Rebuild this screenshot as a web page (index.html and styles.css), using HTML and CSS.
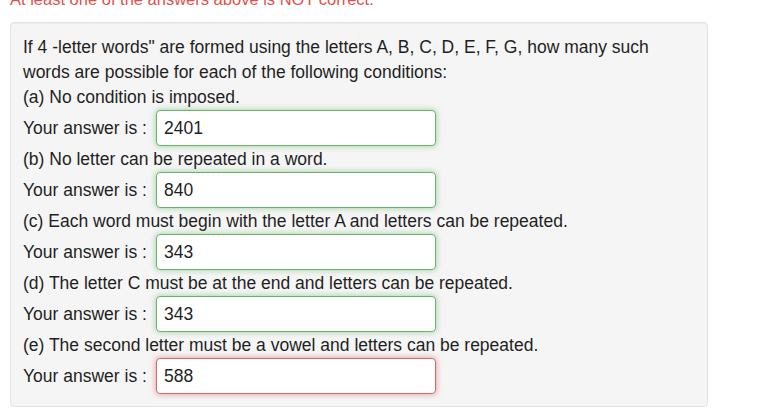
FILE: index.html
```html
<!DOCTYPE html>
<html lang="en">
<head>
  <meta charset="UTF-8">
  <title>Permutations Exercise</title>
  <meta name="viewport" content="width=device-width, initial-scale=1.0">
  <link rel="stylesheet" href="styles.css">
</head>
<body>

  <div class="feedback">At least one of the answers above is NOT correct.</div>

  <section class="well">
    <p class="question">If 4 -letter words" are formed using the letters A, B, C, D, E, F, G, how many such words are possible for each of the following conditions:</p>

    <p class="part">(a) No condition is imposed.</p>
    <div class="answer-row">
      <label for="ans_a">Your answer is :</label>
      <input type="text" id="ans_a" class="correct" value="2401">
    </div>

    <p class="part">(b) No letter can be repeated in a word.</p>
    <div class="answer-row">
      <label for="ans_b">Your answer is :</label>
      <input type="text" id="ans_b" class="correct" value="840">
    </div>

    <p class="part">(c) Each word must begin with the letter A and letters can be repeated.</p>
    <div class="answer-row">
      <label for="ans_c">Your answer is :</label>
      <input type="text" id="ans_c" class="correct" value="343">
    </div>

    <p class="part">(d) The letter C must be at the end and letters can be repeated.</p>
    <div class="answer-row">
      <label for="ans_d">Your answer is :</label>
      <input type="text" id="ans_d" class="correct" value="343">
    </div>

    <p class="part">(e) The second letter must be a vowel and letters can be repeated.</p>
    <div class="answer-row">
      <label for="ans_e">Your answer is :</label>
      <input type="text" id="ans_e" class="wrong" value="588">
    </div>
  </section>

</body>
</html>
```

FILE: styles.css
```css
:root {
  --text-color: #1f1f1f;
  --ok-color: #6cb26c;
  --bad-color: #d66a6a;
}

body {
  font-family: "Liberation Sans", Arial, sans-serif;
  font-size: 17.5px;
  line-height: 25px;
  color: var(--text-color);
  background: white;
  margin: 0;
  padding: 0 10px;
  overflow: hidden;
}

.feedback {
  color: #e0524c;
  font-size: 16.5px;
  margin: -13px 0 10px;
}

.well {
  width: 698px;
  box-sizing: border-box;
  background: #f5f5f5;
  border: 1px solid #e3e3e3;
  border-radius: 4px;
  box-shadow: inset 0 1px 1px rgba(0, 0, 0, 0.05);
  padding: 12px 12px 11px;
}

.well p {
  margin: 0;
}

.answer-row {
  display: flex;
  align-items: center;
  gap: 6px;
  height: 37px;
}

.answer-row label {
  width: 127px;
}

.answer-row input {
  width: 280px;
  height: 36px;
  box-sizing: border-box;
  padding: 0 7px;
  font-family: inherit;
  font-size: 17.5px;
  color: var(--text-color);
  background: white;
  border-radius: 4px;
  border: 1px solid #ccc;
  margin-top: -1px;
}

.answer-row input.correct {
  border-color: var(--ok-color);
  box-shadow: 0 0 6px rgba(92, 184, 92, 0.6);
}

.answer-row input.wrong {
  border-color: var(--bad-color);
  box-shadow: 0 0 6px rgba(217, 83, 79, 0.6);
}
```
